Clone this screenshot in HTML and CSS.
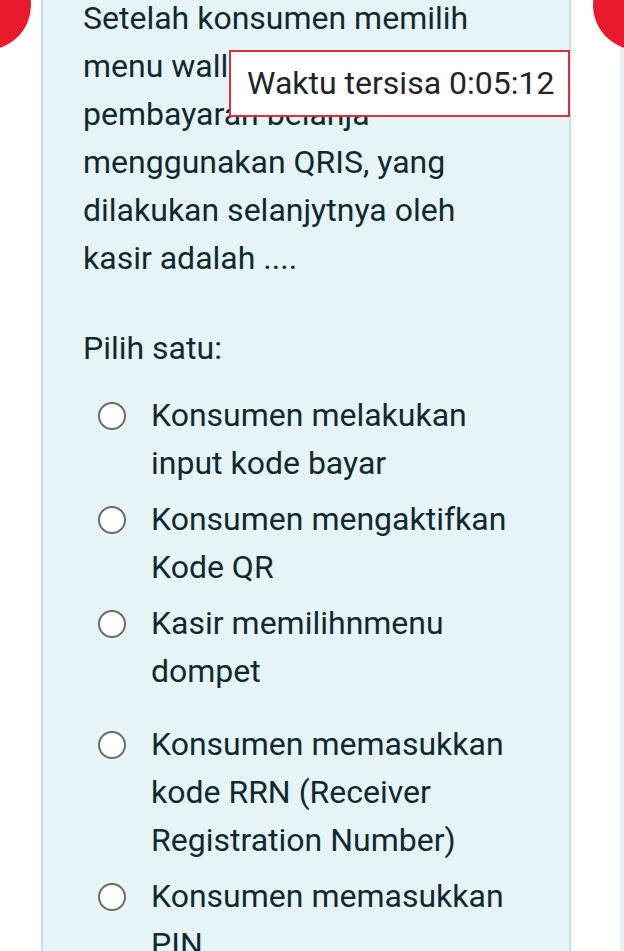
FILE: index.html
```html
<!DOCTYPE html>
<html>
<head>
<meta charset="utf-8">
<link rel="stylesheet" href="styles.css">
</head>
<body>
<div class="page">
  <div class="panel">
    <div class="qtext">Setelah konsumen memilih menu wallet pada pembayaran belanja menggunakan QRIS, yang dilakukan selanjytnya oleh kasir adalah ....</div>
    <div class="prompt">Pilih satu:</div>
    <div class="answers">
      <label class="opt"><span class="radio"></span><span class="otext">Konsumen melakukan input kode bayar</span></label>
      <label class="opt"><span class="radio"></span><span class="otext">Konsumen mengaktifkan Kode QR</span></label>
      <label class="opt opt-gap"><span class="radio"></span><span class="otext">Kasir memilihnmenu dompet</span></label>
      <label class="opt"><span class="radio"></span><span class="otext">Konsumen memasukkan kode RRN (Receiver Registration Number)</span></label>
      <label class="opt"><span class="radio"></span><span class="otext">Konsumen memasukkan PIN</span></label>
    </div>
  </div>
  <div class="scrollstrip"></div>
  <div class="timer">Waktu tersisa 0:05:12</div>
  <div class="dot dot-left"></div>
  <div class="dot dot-right"></div>
</div>
</body>
</html>
```
FILE: styles.css
```css
html, body {
  margin: 0;
  padding: 0;
  background: #ffffff;
  overflow: hidden;
}
.page {
  position: relative;
  width: 624px;
  height: 951px;
  overflow: hidden;
  font-family: Roboto, "Liberation Sans", sans-serif;
  font-size: 32px;
  line-height: 48px;
  color: #0e2a30;
}
.panel {
  margin-left: 41px;
  margin-top: -6px;
  width: 431px;
  height: 1100px;
  padding: 0 55px 0 40px;
  box-sizing: content-box;
  background: #e7f4f7;
  border-left: 2px solid #bfe2e8;
  border-right: 2px solid #bfe2e8;
}
.prompt {
  margin-top: 42px;
}
.answers {
  margin-top: 19px;
  display: flex;
  flex-direction: column;
  gap: 8px;
}
.opt {
  display: flex;
  align-items: flex-start;
}
.opt-gap {
  margin-bottom: 17px;
}
.radio {
  flex: none;
  width: 24px;
  height: 24px;
  margin: 11px 25px 0 15px;
  border: 2px solid #6d6d6d;
  border-radius: 50%;
  background: #ffffff;
}
.otext {
  flex: 1;
}
.timer {
  position: absolute;
  left: 229px;
  top: 50px;
  width: 341px;
  height: 67px;
  box-sizing: border-box;
  border: 2px solid #d7303f;
  background: #ffffff;
  color: #212529;
  padding-left: 16px;
  line-height: 63px;
  white-space: nowrap;
}
.scrollstrip {
  position: absolute;
  right: 0;
  top: 0;
  width: 4px;
  height: 951px;
  background: #eef1f4;
}
.dot {
  position: absolute;
  width: 90px;
  height: 90px;
  border-radius: 50%;
  background: #e91a2d;
  top: -40px;
}
.dot-left {
  left: -59px;
}
.dot-right {
  left: 593px;
}
```
